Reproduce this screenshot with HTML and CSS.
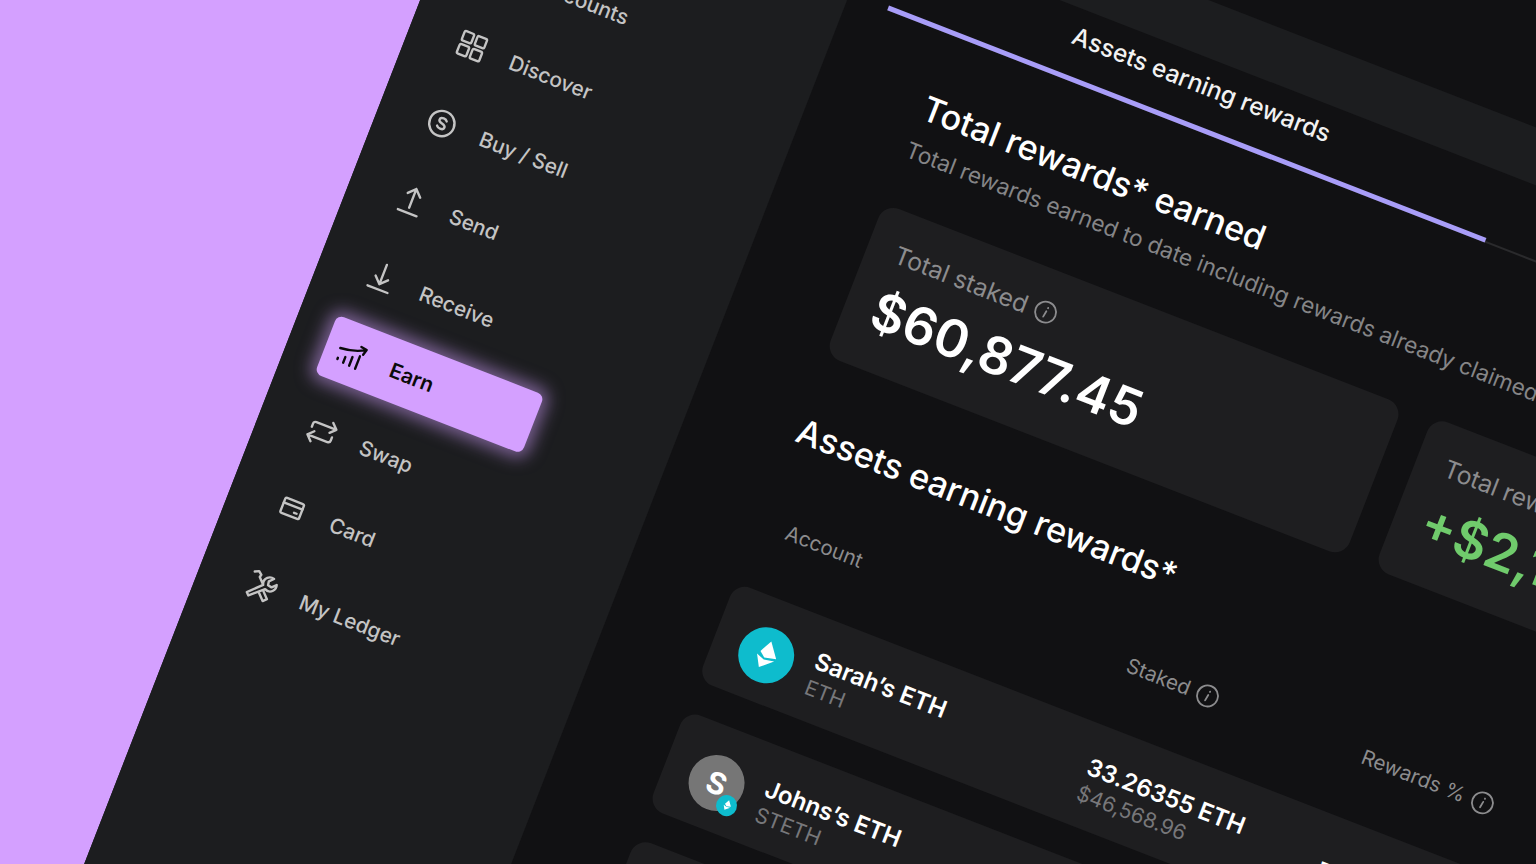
FILE: index.html
```html
<!DOCTYPE html>
<html lang="en">
<head>
<meta charset="utf-8">
<title>Earn</title>
<link rel="stylesheet" href="styles.css">
</head>
<body>
<div class="stage">
  <aside class="sidebar">
    <nav class="nav">
      <a class="item"><span class="icon"></span>Accounts</a>
      <a class="item">
        <svg class="icon" viewBox="0 0 24 24"><rect x="3" y="3" width="7.6" height="7.6" rx="1.2"/><rect x="13.4" y="3" width="7.6" height="7.6" rx="1.2"/><rect x="3" y="13.4" width="7.6" height="7.6" rx="1.2"/><rect x="13.400" y="13.4" width="7.6" height="7.6" rx="1.2"/></svg>
        Discover</a>
      <a class="item">
        <svg class="icon" viewBox="0 0 24 24"><circle cx="12" cy="12" r="9.500"/><path d="M14.800 9.200c-.6-.9-1.600-1.300-2.800-1.300-1.500 0-2.700.8-2.700 2 0 2.800 5.600 1.400 5.600 4.200 0 1.200-1.300 2-2.800 2-1.200 0-2.200-.5-2.900-1.400"/></svg>
        Buy / Sell</a>
      <a class="item">
        <svg class="icon" viewBox="0 0 24 24"><path d="M12 17.500V2.500M7 7.500 12 2.500 17 7.500M4.500 21.500h15"/></svg>
        Send</a>
      <a class="item">
        <svg class="icon" viewBox="0 0 24 24"><path d="M12 2v15.500M7 12.500 12 17.500 17 12.500M4 21.500h16"/></svg>
        Receive</a>
      <a class="item active">
        <svg class="icon" viewBox="0 0 24 24"><path d="M2 10.500C9 10 15 8.500 20.500 5M16.500 4l4.500.7-1.200 4.300M3 18v1M8 15.500V20M13 13.500v7M18 11v10"/></svg>
        Earn</a>
      <a class="item">
        <svg class="icon" viewBox="0 0 24 24"><path d="M3.500 11V8.500a2 2 0 0 1 2-2h16M17.500 2.500l4 4-4 4M20.500 13v2.500a2 2 0 0 1-2 2h-16M6.500 13.500l-4 4 4 4"/></svg>
        Swap</a>
      <a class="item">
        <svg class="icon" viewBox="0 0 24 24"><rect x="4.500" y="6" width="15" height="12" rx="1.200"/><path d="M4.500 10h15M14.500 14.500h2"/></svg>
        Card</a>
      <a class="item">
        <svg class="icon" viewBox="0 0 24 24"><path d="M3 20.500 12.500 11a5 5 0 0 1 1-6 5 5 0 0 1 5-1l-3 3 .5 3 3 .5 3-3a5 5 0 0 1-1 5 5 5 0 0 1-6 1L5 22.500l-2-2zM3 4l3-1.500 2.500 2-.5 2 4 4M14.500 15.500l4.500 4.500-2.500 2.500-4.500-4.500"/></svg>
        My Ledger</a>
    </nav>
  </aside>
  <main class="main">
    <div class="band"></div>
    <div class="tabs"><div class="tab">Assets earning rewards</div></div>
    <h1 class="heading">Total rewards* earned</h1>
    <p class="subtitle">Total rewards earned to date including rewards already claimed</p>
    <div class="cards">
      <section class="card">
        <div class="label">Total staked
          <svg class="info" viewBox="0 0 24 24"><circle cx="12" cy="12" r="10.500"/><path d="M12.400 10.800 11.400 17M12.900 7v.4"/></svg>
        </div>
        <div class="value">$60,877.45</div>
      </section>
      <section class="card">
        <div class="label">Total rewards</div>
        <div class="value green">+$2,177.45</div>
      </section>
    </div>
    <h2 class="heading second">Assets earning rewards*</h2>
    <div class="cols">
      <div class="col first">Account</div>
      <div class="col">Staked <svg class="info" viewBox="0 0 24 24"><circle cx="12" cy="12" r="10.500"/><path d="M12.400 10.800 11.400 17M12.900 7v.4"/></svg></div>
      <div class="col">Rewards % <svg class="info" viewBox="0 0 24 24"><circle cx="12" cy="12" r="10.500"/><path d="M12.400 10.800 11.400 17M12.900 7v.4"/></svg></div>
    </div>
    <div class="rows">
      <div class="row">
        <div class="acct">
          <span class="avatar eth">
            <svg class="eth-logo" viewBox="0 0 24 24"><path d="M13 1 20 13 11 14 7 10z"/><path d="M5 12.500 11 15.500 19 15 9 22z"/></svg>
          </span>
          <div><div class="name">Sarah’s ETH</div><div class="sub">ETH</div></div>
        </div>
        <div><div class="amount">33.26355 ETH</div><div class="fiat">$46,568.96</div></div>
        <div class="amount">7.41%</div>
      </div>
      <div class="row">
        <div class="acct">
          <span class="avatar letter">S
            <span class="badge"><svg class="eth-logo" viewBox="0 0 24 24"><path d="M13 1 20 13 11 14 7 10z"/><path d="M5 12.500 11 15.500 19 15 9 22z"/></svg></span>
          </span>
          <div><div class="name">Johns’s ETH</div><div class="sub">STETH</div></div>
        </div>
        <div><div class="amount">10.12000 ETH</div><div class="fiat">$14,308.49</div></div>
        <div class="amount">7.41%</div>
      </div>
      <div class="row"></div>
    </div>
  </main>
</div>
</body>
</html>
```
FILE: styles.css
```css
* { box-sizing: border-box; }
html, body { margin: 0; height: 100%; }
body {
  background: #d4a0ff;
  overflow: hidden;
  font-family: Inter, "Liberation Sans", sans-serif;
}
.stage {
  position: absolute;
  left: 0;
  top: 0;
  width: 1500px;
  height: 1500px;
  display: flex;
  background: #1c1d1f;
  transform-origin: 0 0;
  transform: rotate(21.25deg) translate(391.6px, -560px);
}
.sidebar {
  flex: 0 0 398px;
  background: #1c1d1f;
  padding: 318px 0 0 37px;
}
.nav { display: flex; flex-direction: column; gap: 19.7px; width: 221.5px; }
.item {
  display: flex;
  align-items: center;
  gap: 25px;
  height: 63px;
  padding-left: 12px;
  border-radius: 7px;
  color: #c4c4c4;
  font-size: 20.8px;
  font-weight: 500;
  white-space: nowrap;
}
.icon {
  flex: none;
  width: 32px;
  height: 32px;
  fill: none;
  stroke: #c4c4c4;
  stroke-width: 1.8;
  stroke-linecap: round;
  stroke-linejoin: round;
}
.active {
  background: #d4a0ff;
  color: #0a0a0a;
  font-weight: 600;
  box-shadow: 0 0 16px 6px rgba(212, 160, 255, .5);
}
.active .icon { stroke: #0a0a0a; }
.main {
  flex: 1;
  background: #111113;
  padding-top: 122px;
  overflow: hidden;
}
.band { height: 54px; margin-left: 40px; background: #1c1d1f; }
.tabs { margin: 0 0 0 40.5px; border-bottom: 2px solid #2a2a2c; }
.tab {
  width: 641px;
  height: 72px;
  margin-bottom: -2px;
  padding-top: 12px;
  border-bottom: 5.5px solid #a89df8;
  color: #f2f2f2;
  font-size: 24.4px;
  font-weight: 500;
  text-align: center;
}
.heading {
  margin: 53px 0 0 110px;
  color: #fff;
  font-size: 34.4px;
  line-height: 48px;
  font-weight: 500;
}
.subtitle {
  margin: 3px 0 0 109.5px;
  color: #858587;
  font-size: 22.6px;
  line-height: 36px;
  white-space: nowrap;
}
.cards { display: flex; gap: 32px; margin: 41px 0 0 107.5px; }
.card {
  flex: 0 0 557.5px;
  height: 163px;
  padding: 25.5px 29.5px 0;
  border-radius: 16px;
  background: #1e1e20;
}
.label {
  display: flex;
  align-items: center;
  gap: 8px;
  color: #8c8c8e;
  font-size: 24.7px;
  line-height: 34px;
}
.info {
  flex: none;
  width: 24px;
  height: 24px;
  fill: none;
  stroke: currentColor;
  stroke-width: 1.8;
  stroke-linecap: round;
}
.value {
  margin: 6px 0 0 -1px;
  color: #fff;
  font-size: 52px;
  line-height: 72px;
  font-weight: 600;
  white-space: nowrap;
}
.green { color: #70cb6c; }
.heading.second { margin-top: 55px; }
.cols, .row {
  display: grid;
  grid-template-columns: 395px 252px 252px 1fr;
  margin-left: 107px;
}
.cols { margin-top: 59px; height: 82px; }
.col {
  display: flex;
  align-items: center;
  align-self: start;
  gap: 7px;
  color: #8c8c8e;
  font-size: 20.6px;
  line-height: 34px;
}
.first { padding-left: 29px; }
.rows { display: flex; flex-direction: column; gap: 32px; }
.row {
  height: 105px;
  padding-top: 8px;
  align-items: center;
  border-radius: 16px;
  background: #1e1e20;
}
.acct { display: flex; align-items: center; gap: 20px; padding-left: 27px; }
.avatar {
  position: relative;
  flex: none;
  display: flex;
  align-items: center;
  justify-content: center;
  width: 56px;
  height: 56px;
  border-radius: 50%;
}
.eth { background: #0ebccd; }
.letter { background: #767676; color: #fff; font-size: 30px; font-weight: 700; }
.eth-logo { width: 32px; height: 32px; fill: #fff; transform: rotate(-6deg); }
.badge {
  position: absolute;
  right: 0;
  bottom: 0;
  display: flex;
  align-items: center;
  justify-content: center;
  width: 21px;
  height: 21px;
  border-radius: 50%;
  background: #0ebccd;
}
.badge .eth-logo { width: 12px; height: 12px; }
.name, .amount { color: #fff; font-size: 24px; line-height: 30px; font-weight: 600; white-space: nowrap; }
.sub, .fiat { color: #77777a; font-size: 21px; line-height: 26px; white-space: nowrap; }
```
